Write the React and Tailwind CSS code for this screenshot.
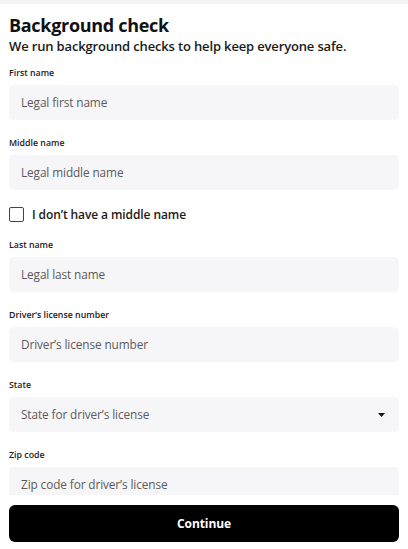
import React from "react";

function Field({ label, placeholder, select }) {
  return (
    <div className="flex flex-col">
      <div className="text-[8.8px] leading-[12px] font-semibold text-[#1c1c1c]">{label}</div>
      <div className="mt-[6px] h-[35px] rounded-[5px] bg-[#f6f5f7] flex items-center pl-[12px] pr-[14px]">
        <span className="flex-1 text-[11.8px] tracking-[-0.1px] text-[#5b5b5b]">{placeholder}</span>
        {select && (
          <svg width="7" height="4" viewBox="0 0 7 4">
            <path d="M0 0 H7 L3.5 4 Z" fill="#111" />
          </svg>
        )}
      </div>
    </div>
  );
}

export default function App() {
  return (
    <div
      className="w-[408px] h-[549px] bg-white flex flex-col overflow-hidden"
      style={{ fontFamily: '"Open Sans", "Noto Sans", sans-serif' }}
    >
      <div className="h-[4px] bg-[#f4f3f5] shrink-0" />
      <div className="flex-1 overflow-hidden px-[9px] pt-[9px]">
        <h1 className="text-[18px] leading-[24px] font-bold tracking-[-0.3px] text-[#111]">Background check</h1>
        <p className="text-[13px] leading-[18px] font-semibold tracking-[-0.15px] text-[#1a1a1a]">
          We run background checks to help keep everyone safe.
        </p>
        <div className="mt-[12px] flex flex-col gap-[17px]">
          <Field label="First name" placeholder="Legal first name" />
          <Field label="Middle name" placeholder="Legal middle name" />
          <label className="flex items-center gap-[8px] h-[15px]">
            <span className="w-[15px] h-[15px] border-[1.5px] border-[#444] rounded-[2px] bg-white shrink-0" />
            <span className="text-[12px] font-semibold tracking-[-0.1px] text-[#1a1a1a]">I don’t have a middle name</span>
          </label>
          <Field label="Last name" placeholder="Legal last name" />
          <Field label="Driver’s license number" placeholder="Driver’s license number" />
          <Field label="State" placeholder="State for driver’s license" select />
          <Field label="Zip code" placeholder="Zip code for driver’s license" />
        </div>
      </div>
      <div className="shrink-0 px-[9px] pt-[10px] pb-[7px] bg-white">
        <button className="w-full h-[37px] rounded-[6px] bg-black text-white text-[12px] font-bold tracking-[-0.1px]">
          Continue
        </button>
      </div>
    </div>
  );
}
